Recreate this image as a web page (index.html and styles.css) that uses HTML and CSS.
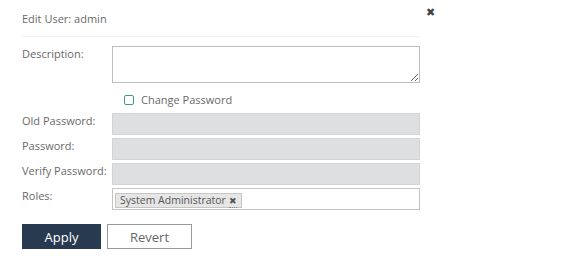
FILE: index.html
```html
<!DOCTYPE html>
<html>
<head>
<meta charset="utf-8">
<link rel="stylesheet" href="styles.css">
</head>
<body>
<div class="dialog">
  <div class="header">
    <span class="title">Edit User: admin</span>
    <span class="close">✖</span>
  </div>
  <div class="form">
    <label class="label">Description:</label>
    <textarea class="textarea"></textarea>

    <div class="spacer"></div>
    <div class="check-row">
      <span class="checkbox"></span>
      <span class="check-text">Change Password</span>
    </div>

    <label class="label">Old Password:</label>
    <div class="input disabled"></div>

    <label class="label">Password:</label>
    <div class="input disabled"></div>

    <label class="label">Verify Password:</label>
    <div class="input disabled"></div>

    <label class="label">Roles:</label>
    <div class="input roles">
      <span class="tag">System Administrator <span class="tag-x">✖</span></span>
    </div>
  </div>
  <div class="actions">
    <button class="btn btn-primary">Apply</button>
    <button class="btn btn-secondary">Revert</button>
  </div>
</div>
</body>
</html>
```

FILE: styles.css
```css
html, body {
  margin: 0;
  padding: 0;
  background: #ffffff;
}

body {
  font-family: "Open Sans", "Liberation Sans", sans-serif;
  color: #6a6a6a;
  font-size: 11px;
}

.dialog {
  position: relative;
  width: 398px;
  margin-left: 22px;
}

.header {
  padding-top: 12px;
  height: 24px;
  border-bottom: 1px solid #eeeeee;
  box-sizing: content-box;
}

.title {
  display: block;
  line-height: 14px;
  font-size: 11px;
}

.close {
  position: absolute;
  left: 404px;
  top: 6px;
  font-size: 11px;
  color: #444;
  line-height: 12px;
}

.form {
  display: grid;
  grid-template-columns: 90px 308px;
  row-gap: 3px;
  margin-top: 9px;
}

.label {
  line-height: 16px;
  padding-top: 0;
}

.textarea {
  display: block;
  box-sizing: border-box;
  width: 308px;
  height: 37px;
  border: 1px solid #bdbdbd;
  margin: 0;
  padding: 0;
  resize: vertical;
  background: #fff;
}

.check-row {
  display: flex;
  align-items: center;
  gap: 7px;
  padding-left: 12px;
  height: 16px;
  margin-top: 6px;
  margin-bottom: 2px;
}

.checkbox {
  display: block;
  box-sizing: border-box;
  width: 10px;
  height: 10px;
  border: 1.5px solid #3b9a86;
  border-radius: 2px;
}

.check-text {
  line-height: 16px;
}

.input {
  box-sizing: border-box;
  height: 22px;
}

.disabled {
  background: #dedfe0;
  border: 1px solid #d2d4d5;
}

.roles {
  background: #fff;
  border: 1px solid #c4c4c4;
  padding: 3px 0 0 2px;
}

.tag {
  display: inline-block;
  box-sizing: border-box;
  height: 15px;
  line-height: 13px;
  padding: 0 4px 0 4px;
  background: #e6e6e6;
  border: 1px solid #c6c6c6;
  font-size: 10.5px;
  color: #555;
}

.tag-x {
  font-size: 9px;
  color: #555;
  border-bottom: 1px dotted #888;
}

.actions {
  display: flex;
  gap: 6px;
  margin-top: 14px;
}

.btn {
  box-sizing: border-box;
  height: 25px;
  font-family: "Open Sans", "Liberation Sans", sans-serif;
  font-size: 13px;
  padding: 0;
  margin: 0;
  border-radius: 0;
}

.btn-primary {
  width: 79px;
  background: #283a4f;
  border: 1px solid #283a4f;
  color: #fff;
}

.btn-secondary {
  width: 85px;
  background: #fff;
  border: 1px solid #999;
  color: #666;
}
```
